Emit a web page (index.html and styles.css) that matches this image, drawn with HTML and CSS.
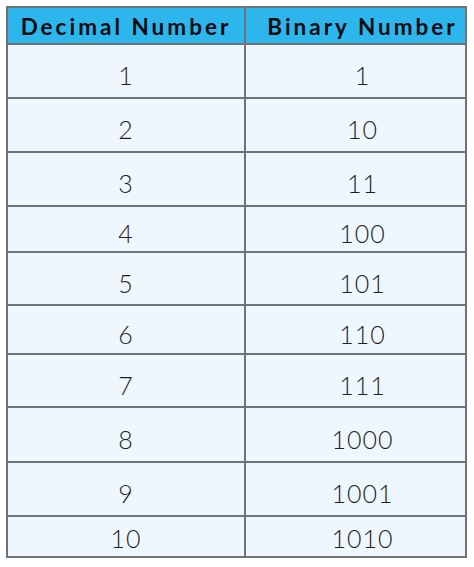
FILE: index.html
```html
<!DOCTYPE html>
<html>
<head>
<meta charset="utf-8">
<link rel="stylesheet" href="styles.css">
</head>
<body>
<table class="conv">
  <thead>
    <tr><th>Decimal Number</th><th class="bin">Binary Number</th></tr>
  </thead>
  <tbody>
    <tr><td>1</td><td class="bin">1</td></tr>
    <tr><td>2</td><td class="bin">10</td></tr>
    <tr><td>3</td><td class="bin">11</td></tr>
    <tr><td>4</td><td class="bin">100</td></tr>
    <tr><td>5</td><td class="bin">101</td></tr>
    <tr><td>6</td><td class="bin">110</td></tr>
    <tr><td>7</td><td class="bin">111</td></tr>
    <tr><td>8</td><td class="bin">1000</td></tr>
    <tr><td>9</td><td class="bin">1001</td></tr>
    <tr><td>10</td><td class="bin">1010</td></tr>
  </tbody>
</table>
</body>
</html>
```
FILE: styles.css
```css
html, body { margin: 0; padding: 0; background: #ffffff; }
body { padding: 6px 0 0 6px; }
.conv {
  border-collapse: collapse;
  width: 461px;
  table-layout: fixed;
  font-family: "Lato", "Open Sans", sans-serif;
}
.conv th, .conv td {
  border: 2px solid #6e7378;
  padding: 0;
  text-align: center;
  color: #161616;
}
.conv th:first-child, .conv td:first-child { width: 236px; }
.conv th {
  background: #2cb6ec;
  height: 33px;
  font-size: 22.5px;
  font-weight: 700;
  letter-spacing: 3px;
  color: #0b0b12;
  padding-top: 2px;
}
.conv th.bin { padding-left: 14px; }
.conv td {
  background: #eef7fd;
  font-size: 25px;
  font-weight: 300;
  color: #1e1e1e;
  padding-top: 8px;
  letter-spacing: 1px;
}
.conv td.bin { padding-left: 14px; }
.conv tbody tr { height: 52px; }
.conv tbody tr:nth-child(1) { height: 54px; }
.conv tbody tr:nth-child(2) { height: 54px; }
.conv tbody tr:nth-child(3) { height: 54px; }
.conv tbody tr:nth-child(4) { height: 46px; }
.conv tbody tr:nth-child(5) { height: 53px; }
.conv tbody tr:nth-child(6) { height: 49px; }
.conv tbody tr:nth-child(7) { height: 53px; }
.conv tbody tr:nth-child(8) { height: 55px; }
.conv tbody tr:nth-child(9) { height: 54px; }
.conv tbody tr:nth-child(10) { height: 41px; }
.conv tbody tr:nth-child(10) td { padding-top: 2px; }
```
